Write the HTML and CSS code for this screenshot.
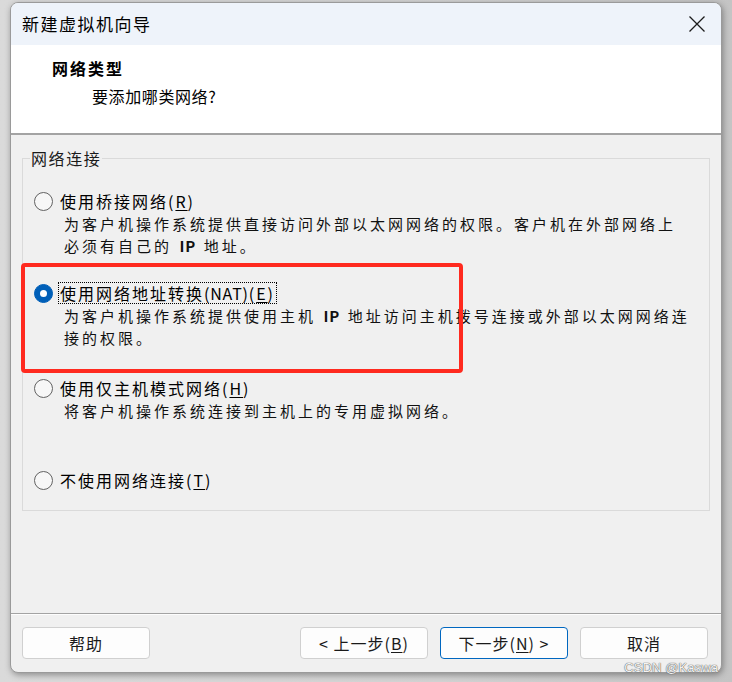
FILE: index.html
```html
<!DOCTYPE html>
<html lang="zh-CN">
<head>
<meta charset="utf-8">
<title>新建虚拟机向导</title>
<link rel="stylesheet" href="styles.css">
</head>
<body>
<div class="window">
  <div class="titlebar">
    <span class="title">新建虚拟机向导</span>
    <svg class="close" width="16" height="16" viewBox="0 0 16 16" aria-label="关闭"><path d="M0.5 0.5L15.5 15.5M15.5 0.5L0.5 15.5" stroke="#1b1b1b" stroke-width="1.3" fill="none"/></svg>
  </div>
  <div class="header">
    <div class="h-title">网络类型</div>
    <div class="h-sub">要添加哪类网络?</div>
  </div>
  <div class="content">
    <fieldset class="group">
      <legend>网络连接</legend>
      <div class="opt">
        <div class="row"><span class="radio"></span><span class="label">使用桥接网络(<u>R</u>)</span></div>
        <div class="desc"><div>为客户机操作系统提供直接访问外部以太网网络的权限。客户机在外部网络上</div><div>必须有自己的 <span class="ip">IP</span> 地址。</div></div>
      </div>
      <div class="opt opt-nat">
        <div class="highlight"></div>
        <div class="row"><span class="radio on"></span><span class="label focus">使用网络地址转换<span class="lat">(NAT)</span>(<u>E</u>)</span></div>
        <div class="desc"><div>为客户机操作系统提供使用主机 <span class="ip">IP</span> 地址访问主机拨号连接或外部以太网网络连</div><div>接的权限。</div></div>
      </div>
      <div class="opt opt-wide">
        <div class="row"><span class="radio"></span><span class="label">使用仅主机模式网络(<u>H</u>)</span></div>
        <div class="desc"><div>将客户机操作系统连接到主机上的专用虚拟网络。</div></div>
      </div>
      <div class="opt opt-last">
        <div class="row"><span class="radio"></span><span class="label">不使用网络连接(<u>T</u>)</span></div>
      </div>
    </fieldset>
  </div>
  <div class="footer">
    <button class="btn">帮助</button>
    <button class="btn back">&lt; 上一步(<u>B</u>)</button>
    <button class="btn primary">下一步(<u>N</u>) &gt;</button>
    <button class="btn">取消</button>
  </div>
</div>
<div class="watermark">CSDN @Kaswa</div>
</body>
</html>
```

FILE: styles.css
```css
* { box-sizing: border-box; }

body {
  margin: 0;
  width: 732px;
  height: 682px;
  overflow: hidden;
  position: relative;
  background: linear-gradient(90deg, #dadada 0%, #d2d2d2 60%, #c4c4c4 100%);
  font-family: "Noto Sans CJK SC", "Noto Sans", sans-serif;
  color: #000;
}

.window {
  margin: 2px 0 0 10px;
  width: 712px;
  height: 671px;
  border: 1px solid #9a9a9a;
  border-radius: 8px;
  overflow: hidden;
  display: flex;
  flex-direction: column;
  background: #f0f0f0;
  box-shadow: 1px 2px 6px rgba(0, 0, 0, 0.35);
}

.titlebar {
  height: 42px;
  flex: none;
  background: #eef3fa;
  display: flex;
  align-items: center;
  justify-content: space-between;
  padding: 0 16px 0 11px;
}

.title {
  font-size: 17px;
  letter-spacing: 1.5px;
  line-height: 22px;
  color: #000;
}

.close { display: block; }

.header {
  height: 90px;
  flex: none;
  background: #fff;
  border-bottom: 2px solid #a3a3a3;
  padding-top: 12px;
}

.h-title {
  padding-left: 41px;
  font-size: 16px;
  font-weight: 700;
  line-height: 22px;
  letter-spacing: 2px;
}

.h-sub {
  margin-top: 6px;
  padding-left: 81px;
  font-size: 16px;
  line-height: 22px;
  letter-spacing: 0.6px;
}

.content {
  flex: 1;
  padding: 12px 11px 0 11px;
}

.group {
  margin: 0;
  border: 1px solid #dadada;
  padding: 21px 0 19px 11px;
}

.group legend {
  margin-left: -4px;
  padding: 0 1px;
  font-size: 16px;
  line-height: 22px;
  letter-spacing: 1.6px;
  color: #1a1a1a;
}

.opt { position: relative; }
.opt + .opt { margin-top: 25px; }
.opt.opt-wide { margin-top: 28px; }
.opt.opt-last { margin-top: 47px; }

.row {
  display: flex;
  align-items: center;
  height: 22px;
}

.radio {
  width: 19px;
  height: 19px;
  flex: none;
  border-radius: 50%;
  border: 1px solid #626262;
  background: #f7f7f7;
  margin-right: 5px;
  position: relative;
}

.radio.on {
  background: #005fb8;
  border-color: #005fb8;
}

.radio.on::after {
  content: "";
  position: absolute;
  left: 5px;
  top: 5px;
  width: 7px;
  height: 7px;
  border-radius: 50%;
  background: #fff;
}

.label {
  font-size: 16px;
  line-height: 20px;
  letter-spacing: 2px;
  border: 1px dotted transparent;
  padding: 0 1px;
  white-space: nowrap;
}

.label .lat { letter-spacing: 0.8px; }

.label.focus { border-color: #000; }

.label u, .btn u { text-decoration-thickness: 1px; text-underline-offset: 2px; }

.desc {
  margin-top: 1px;
  padding-left: 30px;
  font-size: 15px;
  line-height: 22px;
  letter-spacing: 3px;
  white-space: nowrap;
  color: #111;
}

.desc .ip {
  font-weight: 700;
  letter-spacing: 1px;
  padding: 0 1px;
}

.highlight {
  position: absolute;
  left: -13px;
  top: -19px;
  width: 442px;
  height: 110px;
  border: 4px solid #ff2a1f;
  border-radius: 4px;
  pointer-events: none;
}

.footer {
  height: 59px;
  flex: none;
  border-top: 1px solid #a3a3a3;
  box-shadow: inset 0 1px 0 #fdfdfd;
  display: flex;
  align-items: flex-start;
  padding: 13px 13px 0 11px;
}

.btn {
  width: 128px;
  height: 32px;
  border: 1px solid #d0d0d0;
  border-radius: 4px;
  background: #fdfdfd;
  font-family: "Noto Sans CJK SC", "Noto Sans", sans-serif;
  font-size: 16px;
  letter-spacing: 1px;
  color: #1a1a1a;
  padding: 0;
  line-height: 30px;
}

.btn + .btn { margin-left: 12px; }
.btn.back { margin-left: auto; }

.btn.primary { border-color: #0067c0; }

.watermark {
  position: absolute;
  right: 14px;
  bottom: 7px;
  font-family: "Liberation Sans", Arial, sans-serif;
  font-size: 13px;
  color: rgba(255, 255, 255, 0.95);
  text-shadow: 0 0 1px #555, 0 0 1px #555;
  letter-spacing: 0.1px;
}
```
